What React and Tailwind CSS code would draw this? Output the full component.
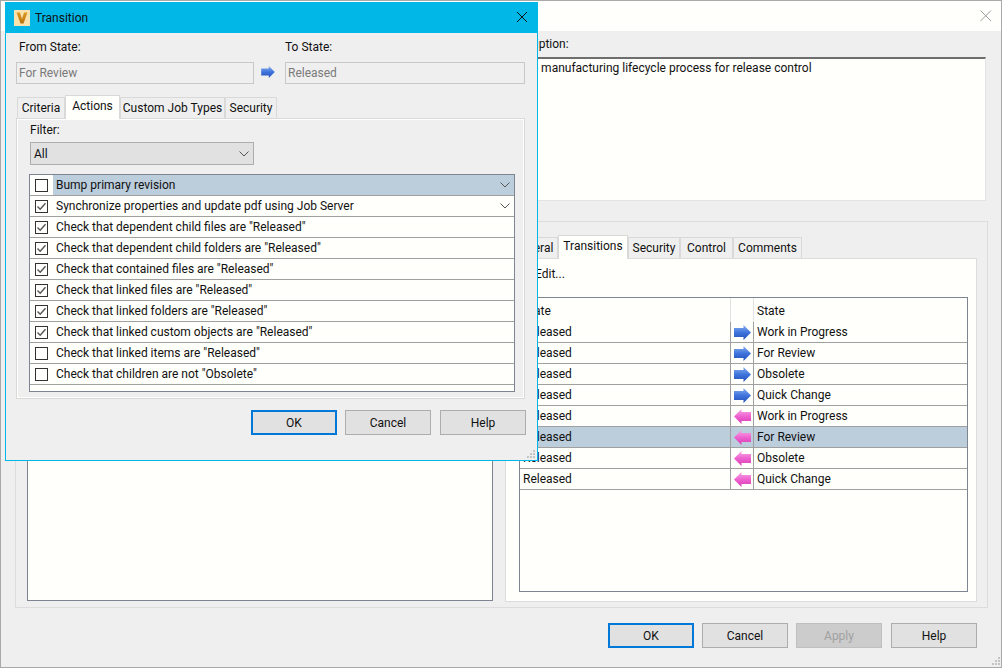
import React from "react";

const F = "font-['Roboto','Noto_Sans',sans-serif]";

function Arrow({ left = false, small = false }) {
  const id = left ? "pinkG" : "blueG";
  return (
    <svg width={small ? 14 : 17} height={small ? 12 : 15} viewBox="0 0 17 15" style={{ transform: left ? "scaleX(-1)" : undefined }}>
      <defs>
        {left ? (
          <linearGradient id={id} x1="0" y1="0" x2="0" y2="1">
            <stop offset="0" stopColor="#f8a8e6" />
            <stop offset="0.5" stopColor="#ee62cf" />
            <stop offset="1" stopColor="#d83cb4" />
          </linearGradient>
        ) : (
          <linearGradient id={id} x1="0" y1="0" x2="0" y2="1">
            <stop offset="0" stopColor="#88aef0" />
            <stop offset="0.5" stopColor="#3f74dc" />
            <stop offset="1" stopColor="#2450b8" />
          </linearGradient>
        )}
      </defs>
      <path d="M0 3 H9.5 V0 L17 7.5 L9.5 15 V12 H0 Z" fill={`url(#${id})`} />
    </svg>
  );
}

function Check({ on }) {
  return (
    <span className="w-[13px] h-[13px] border border-[#333333] bg-[#fffffb] flex items-center justify-center shrink-0">
      {on && (
        <svg width="11" height="11" viewBox="0 0 11 11">
          <path d="M1.5 5.5 L4.2 8.2 L9.5 2.2" fill="none" stroke="#555555" strokeWidth="1.4" />
        </svg>
      )}
    </span>
  );
}

function Chevron() {
  return (
    <svg width="10" height="6" viewBox="0 0 10 6">
      <path d="M0.5 0.5 L5 5 L9.5 0.5" fill="none" stroke="#555555" strokeWidth="1" />
    </svg>
  );
}

function Btn({ children, primary, disabled, cls = "" }) {
  return (
    <div
      className={`w-[86px] h-[25px] flex items-center justify-center text-[12px] ${cls} ${
        primary ? "border-2 border-[#0078d7] bg-[#e1e1e1]" : disabled ? "border border-[#bfbfbf] bg-[#cccccc] text-[#a0a0a0]" : "border border-[#adadad] bg-[#e1e1e1]"
      }`}
    >
      {children}
    </div>
  );
}

function Grip({ cls }) {
  return (
    <svg width="9" height="9" viewBox="0 0 9 9" className={`absolute ${cls}`}>
      {[[6, 0], [3, 3], [6, 3], [0, 6], [3, 6], [6, 6]].map(([x, y], i) => (
        <rect key={i} x={x} y={y} width="2" height="2" fill="#c4c4c4" />
      ))}
    </svg>
  );
}

function Tab({ children, active, w }) {
  return (
    <div
      className={`${w} flex items-center justify-center text-[12px] border border-[#d9d9d9] border-b-0 ${
        active ? "h-[24px] bg-[#fffffb] -mb-px z-10 pb-[4px]" : "h-[21px] bg-[#efefef] mt-[1px]"
      }`}
    >
      {children}
    </div>
  );
}

const actions = [
  ["Bump primary revision", false, true, true],
  ["Synchronize properties and update pdf using Job Server", true, false, true],
  ['Check that dependent child files are "Released"', true],
  ['Check that dependent child folders are "Released"', true],
  ['Check that contained files are "Released"', true],
  ['Check that linked files are "Released"', true],
  ['Check that linked folders are "Released"', true],
  ['Check that linked custom objects are "Released"', true],
  ['Check that linked items are "Released"', false],
  ['Check that children are not "Obsolete"', false],
];

const rows = [
  ["Work in Progress", false],
  ["For Review", false],
  ["Obsolete", false],
  ["Quick Change", false],
  ["Work in Progress", true],
  ["For Review", true, true],
  ["Obsolete", true],
  ["Quick Change", true],
];

function BackWindow() {
  return (
    <div className="w-[1002px] h-[668px] bg-[#efefef] border border-[#a9a9a9] flex flex-col">
      <div className="h-[30px] bg-[#fffffb] flex justify-end items-center pr-[9px] shrink-0">
        <svg width="12" height="12" viewBox="0 0 12 12">
          <path d="M0.5 0.5 L11 11 M11 0.5 L0.5 11" stroke="#9a9a9a" strokeWidth="1" />
        </svg>
      </div>
      <div className="flex flex-col pl-[504px] pt-[3px] h-[187px] shrink-0">
        <div className="text-[12px] leading-[20px]">Description:</div>
        <div className="mt-[3px] h-[144px] w-[481px] bg-[#fffffb] border-t-2 border-t-[#6e6e6e] border-x border-b border-x-[#e3e3e3] border-b-[#e3e3e3] pl-[12px] text-[12px] leading-[18px]">
          The manufacturing lifecycle process for release control
        </div>
      </div>
      <div className="ml-[14px] w-[973px] h-[387px] mt-[3px] border border-[#dcdcdc] flex shrink-0">
        <div className="w-[489px] pl-[11px] flex flex-col justify-end pb-[6px]">
          <div className="w-[466px] h-[300px] bg-[#fffffb] border border-[#7f8590]" />
        </div>
        <div className="w-[472px] flex flex-col pt-[14px]">
          <div className="flex pl-[3px] h-[22px] items-end">
            <Tab w="w-[50px]">General</Tab>
            <Tab active w="w-[70px]">Transitions</Tab>
            <Tab w="w-[52px]">Security</Tab>
            <Tab w="w-[53px]">Control</Tab>
            <Tab w="w-[69px]">Comments</Tab>
          </div>
          <div className="h-[344px] bg-[#fffffb] border border-[#dcdcdc] pl-[13px] flex flex-col">
            <div className="h-[38px] pt-[6px] pl-[16px] text-[12px] leading-[18px]">Edit...</div>
            <div className="w-[449px] h-[295px] border border-[#7f8590] text-[12px]">
              <div className="flex h-[24px] items-center">
                <div className="w-[211px] pl-[3px] pt-px h-full flex items-center border-r border-r-[#e3e3e3]">State</div>
                <div className="w-[23px] h-full border-r border-r-[#e3e3e3]" />
                <div className="pl-[3px] pt-px">State</div>
              </div>
              {rows.map(([name, back, sel], i) => (
                <div key={i} className={`flex h-[21px] items-center border-b border-b-[#a0a0a0] ${sel ? "bg-[#bccddc]" : ""}`}>
                  <div className="w-[211px] pl-[3px] h-full flex items-center border-r border-r-[#a0a0a0]">Released</div>
                  <div className="w-[23px] h-full flex items-center justify-center border-r border-r-[#a0a0a0]">
                    <Arrow left={back} />
                  </div>
                  <div className="pl-[3px]">{name}</div>
                </div>
              ))}
            </div>
          </div>
        </div>
      </div>
      <div className="flex justify-end pr-[24px] pt-[15px]">
        <Btn primary>OK</Btn>
        <Btn cls="ml-[8px]">Cancel</Btn>
        <Btn disabled cls="ml-[8px]">Apply</Btn>
        <Btn cls="ml-[9px]">Help</Btn>
      </div>
      <Grip cls="left-[992px] top-[657px]" />
    </div>
  );
}

function Dialog() {
  return (
    <div className="absolute left-[5px] top-[2px] w-[533px] h-[459px] border border-[#00b7e8] bg-[#efefef] flex flex-col">
      <div className="h-[30px] bg-[#00b7e8] flex items-center pl-[8px] pr-[9px] shrink-0">
        <div className="w-[16px] h-[16px] bg-[#f9e2ad] flex items-center justify-center">
          <svg width="12" height="12" viewBox="0 0 12 12">
            <defs>
              <linearGradient id="vLogo" x1="0" y1="0" x2="0" y2="1">
                <stop offset="0" stopColor="#e09a24" />
                <stop offset="1" stopColor="#b8720c" />
              </linearGradient>
            </defs>
            <path d="M0.5 0.5 H4 L6 7 L8 0.5 H11.5 L7.5 11.5 H4.5 Z" fill="url(#vLogo)" />
          </svg>
        </div>
        <div className="ml-[5px] text-[12px]">Transition</div>
        <svg width="12" height="12" viewBox="0 0 12 12" className="ml-auto mb-[2px]">
          <path d="M1 1 L11 11 M11 1 L1 11" stroke="#111111" strokeWidth="1" />
        </svg>
      </div>
      <div className="flex pl-[10px] h-[56px] shrink-0">
        <div className="w-[238px]">
          <div className="text-[12px] leading-[18px] pl-[3px] pt-[5px]">From State:</div>
          <div className="mt-[6px] h-[22px] border border-[#c8c8c8] px-[2px] text-[12px] text-[#7a7a7a] bg-[#efefef] flex items-center">For Review</div>
        </div>
        <div className="w-[31px] flex justify-center pt-[33px] pr-[3px]">
          <div className="flex h-[12px]"><Arrow small /></div>
        </div>
        <div className="w-[240px]">
          <div className="text-[12px] leading-[18px] pt-[5px]">To State:</div>
          <div className="mt-[6px] h-[22px] border border-[#c8c8c8] px-[2px] text-[12px] text-[#7a7a7a] bg-[#efefef] flex items-center">Released</div>
        </div>
      </div>
      <div className="pl-[10px] pr-[12px] pt-[7px] flex flex-col shrink-0">
        <div className="flex pl-[1px] h-[22px] items-end">
          <Tab w="w-[48px]">Criteria</Tab>
          <Tab active w="w-[55px]">Actions</Tab>
          <Tab w="w-[105px]">Custom Job Types</Tab>
          <Tab w="w-[52px]">Security</Tab>
        </div>
        <div className="w-[509px] h-[281px] border border-[#d9d9d9] outline outline-1 outline-[#fffffb] -outline-offset-2 pl-[13px] pt-[2px]">
          <div className="text-[12px] leading-[18px]">Filter:</div>
          <div className="mt-[3px] w-[224px] h-[23px] border border-[#adadad] bg-[#e1e1e1] flex items-center justify-between pl-[3px] pr-[4px] text-[12px]">
            All
            <Chevron />
          </div>
          <div className="mt-[9px] -ml-px w-[486px] h-[218px] border border-[#7f8590] bg-[#fffffb] text-[12px]">
            {actions.map(([label, on, sel, chev], i) => (
              <div key={i} className="flex h-[21px] items-center border-b border-b-[#a0a0a0]">
                <div className="w-[23px] flex pl-[5px]"><Check on={on} /></div>
                <div className={`flex-1 h-full flex items-center justify-between pl-[3px] pr-[4px] ${sel ? "bg-[#bccddc]" : ""}`}>
                  <span>{label}</span>
                  {chev && <Chevron />}
                </div>
              </div>
            ))}
          </div>
        </div>
      </div>
      <div className="flex justify-end pr-[11px] pt-[11px]">
        <Btn primary>OK</Btn>
        <Btn cls="ml-[8px]">Cancel</Btn>
        <Btn cls="ml-[9px]">Help</Btn>
      </div>
      <Grip cls="left-[521px] top-[447px]" />
    </div>
  );
}

export default function App() {
  return (
    <div className={`relative w-[1002px] h-[668px] overflow-hidden text-[#111111] ${F}`}>
      <BackWindow />
      <Dialog />
    </div>
  );
}
